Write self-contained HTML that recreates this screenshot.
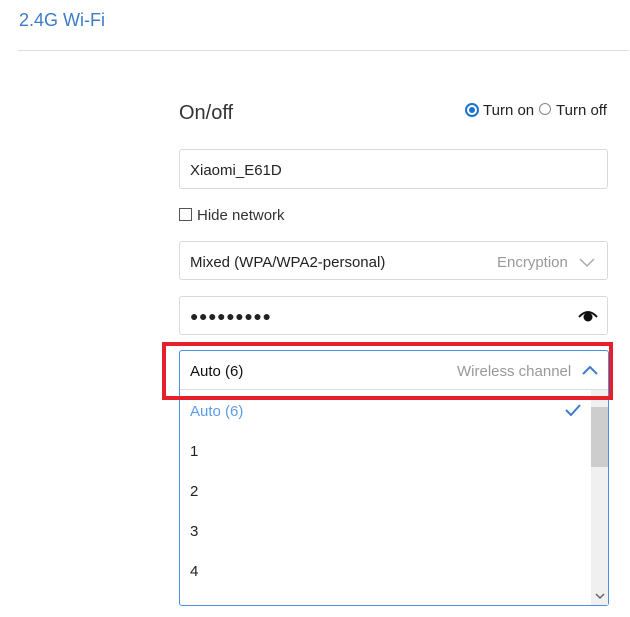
<!DOCTYPE html>
<html><head><style>
body{margin:0;width:630px;height:617px;background:#fff;font-family:"Liberation Sans",sans-serif;position:relative;overflow:hidden;color:#222}
.a{position:absolute}
.box{position:absolute;left:179px;width:429px;border:1px solid #d9d9d9;border-radius:3px;box-sizing:border-box;font-size:15px}
.t{position:absolute;font-size:15px}
</style></head><body>
<div class="a" style="left:19px;top:10px;font-size:18px;color:#3d7cc9">2.4G Wi-Fi</div>
<div class="a" style="left:18px;top:50px;width:611px;height:1px;background:#ddd"></div>
<div class="a" style="left:179px;top:102px;font-size:20px;color:#333">On/off</div>
<div class="a" style="left:465px;top:103px;width:10px;height:10px;border:2px solid #1a73d0;border-radius:50%"></div>
<div class="a" style="left:469px;top:107px;width:6px;height:6px;background:#1a73d0;border-radius:50%"></div>
<div class="t" style="left:483px;top:102px">Turn on</div>
<div class="a" style="left:539px;top:103px;width:10px;height:10px;border:1.5px solid #888;border-radius:50%"></div>
<div class="t" style="left:556px;top:102px">Turn off</div>
<div class="box" style="top:149px;height:40px"><span class="a" style="left:10px;top:12px">Xiaomi_E61D</span></div>
<div class="a" style="left:179px;top:208px;width:11px;height:11px;border:1px solid #555"></div>
<div class="t" style="left:197px;top:207px;color:#333">Hide network</div>
<div class="box" style="top:241px;height:39px"><span class="a" style="left:10px;top:12px">Mixed (WPA/WPA2-personal)</span><span class="a" style="left:317px;top:12px;color:#999">Encryption</span>
<svg class="a" style="left:398px;top:14px" width="18" height="12"><path d="M2 3l7 7 7-7" fill="none" stroke="#aaa" stroke-width="1.5"/></svg></div>
<div class="box" style="top:296px;height:39px"><span class="a" style="left:10px;top:11px;font-size:14px;letter-spacing:0.6px">●●●●●●●●●</span>
<svg class="a" style="left:398px;top:12px" width="20" height="14"><path d="M1 8Q10 -2 19 8" fill="none" stroke="#111" stroke-width="2"/><circle cx="10" cy="8" r="4.5" fill="#111"/></svg></div>
<div class="a" style="left:179px;top:350px;width:430px;height:256px;border:1px solid #4a90e2;border-radius:3px;box-sizing:border-box"></div>
<div class="a" style="left:180px;top:389px;width:428px;height:1px;background:#ddd"></div>
<div class="t" style="left:190px;top:363px;color:#111">Auto (6)</div>
<div class="t" style="left:457px;top:363px;color:#999">Wireless channel</div>
<svg class="a" style="left:581px;top:364px" width="18" height="12"><path d="M2 10l7-7 7 7" fill="none" stroke="#3d7cc9" stroke-width="2"/></svg>
<div class="t" style="left:190px;top:403px;color:#5b9de8">Auto (6)</div>
<svg class="a" style="left:565px;top:404px" width="16" height="12"><path d="M1 6l5 5 9-10" fill="none" stroke="#3d7cc9" stroke-width="2"/></svg>
<div class="t" style="left:190px;top:443px">1</div>
<div class="t" style="left:190px;top:483px">2</div>
<div class="t" style="left:190px;top:523px">3</div>
<div class="t" style="left:190px;top:563px">4</div>
<div class="a" style="left:591px;top:390px;width:17px;height:215px;background:#f0f0f0"></div>
<div class="a" style="left:591px;top:407px;width:17px;height:60px;background:#cdcdcd"></div>
<svg class="a" style="left:595px;top:592px" width="10" height="8"><path d="M1 2l4 4 4-4" fill="none" stroke="#666" stroke-width="1.5"/></svg>
<div class="a" style="left:162px;top:342px;width:451px;height:58px;border:4px solid #e5202a;box-sizing:border-box"></div>
</body></html>
